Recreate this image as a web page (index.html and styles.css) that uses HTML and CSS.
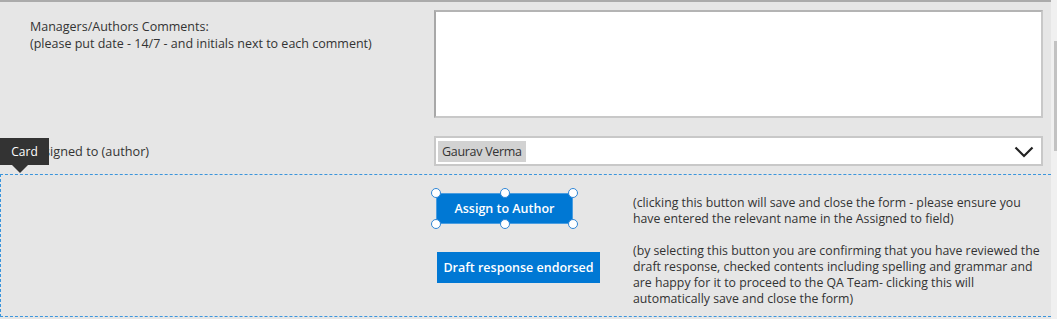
FILE: index.html
```html
<!DOCTYPE html>
<html>

<head>
    <title>Review Form</title>
    <link rel="stylesheet" href="styles.css">
</head>

<body>

    <div class="screen">
        <div class="canvas">

            <div class="row comments-row">
                <div class="label">
                    Managers/Authors Comments:<br>
                    (please put date - 14/7 - and initials next to each comment)
                </div>
                <textarea class="comments"></textarea>
            </div>

            <div class="row assign-row">
                <div class="label single">Assigned to (author)</div>
                <div class="dropdown">
                    <span class="chip">Gaurav Verma</span>
                    <svg class="chevron" width="20" height="12" viewBox="0 0 20 12">
                        <path d="M1.5 1.5 L10 10 L18.5 1.5" fill="none" stroke="#222" stroke-width="2.2" />
                    </svg>
                </div>
                <div class="tooltip">Card</div>
            </div>

            <div class="card">
                <div class="card-row">
                    <div class="btn-cell">
                        <div class="selected">
                            <button class="action-btn assign-btn">Assign to Author</button>
                            <span class="handle h-tl"></span>
                            <span class="handle h-tm"></span>
                            <span class="handle h-tr"></span>
                            <span class="handle h-bl"></span>
                            <span class="handle h-bm"></span>
                            <span class="handle h-br"></span>
                        </div>
                    </div>
                    <p class="note">(clicking this button will save and close the form - please ensure you
                        have entered the relevant name in the Assigned to field)</p>
                </div>
                <div class="card-row second">
                    <div class="btn-cell">
                        <button class="action-btn endorse-btn">Draft response endorsed</button>
                    </div>
                    <p class="note">(by selecting this button you are confirming that you have reviewed the
                        draft response, checked contents including spelling and grammar and
                        are happy for it to proceed to the QA Team- clicking this will
                        automatically save and close the form)</p>
                </div>
            </div>

        </div>

        <div class="scrollbar">
            <div class="thumb"></div>
        </div>
    </div>

</body>

</html>
```

FILE: styles.css
```css
body {
    margin: 0;
    font-family: "Open Sans", "Liberation Sans", sans-serif;
    font-size: 12.5px;
    color: #333;
    background-color: #f0f0f0;
}

.screen {
    display: flex;
    height: 319px;
    overflow: hidden;
}

.canvas {
    flex: 1;
    background-color: #e6e6e6;
    border-top: 2px solid #ababab;
}

.row {
    display: flex;
    position: relative;
}

.label {
    width: 404px;
    padding-left: 30px;
    line-height: 17px;
}

.comments-row {
    padding-top: 8px;
}

.comments-row .label {
    padding-top: 8px;
}

.comments {
    box-sizing: border-box;
    width: 609px;
    height: 108px;
    margin: 0;
    border: 2px solid #c8c8c8;
    border-top-color: #b4b4b4;
    border-left-color: #a8a8a8;
    background: #fff;
    resize: none;
}

.assign-row {
    margin-top: 18px;
}

.label.single {
    padding-top: 7px;
    font-size: 12.7px;
}

.dropdown {
    box-sizing: border-box;
    width: 609px;
    height: 30px;
    border: 2px solid #c8c8c8;
    background: #fff;
    display: flex;
    align-items: center;
    justify-content: space-between;
    padding: 0 7px 0 2px;
}

.chip {
    background-color: #d2d2d2;
    color: #333;
    padding: 2px 4px;
    line-height: 17px;
    font-size: 12.5px;
    letter-spacing: -0.3px;
}

.chevron {
    margin-top: 2px;
}

.tooltip {
    position: absolute;
    left: 0;
    top: 2px;
    width: 49px;
    height: 27px;
    background-color: #333;
    color: #fff;
    font-size: 12px;
    line-height: 27px;
    text-align: center;
}

.tooltip::after {
    content: "";
    position: absolute;
    left: 12px;
    top: 27px;
    border-left: 8px solid transparent;
    border-right: 8px solid transparent;
    border-top: 8px solid #333;
}

.card {
    box-sizing: border-box;
    margin-top: 8px;
    height: 143px;
    border: 1px dashed #3b95dc;
    border-right: none;
    padding-top: 18px;
}

.card-row {
    display: flex;
}

.card-row.second {
    margin-top: 15px;
}

.btn-cell {
    width: 197px;
    padding-left: 435px;
}

.selected {
    position: relative;
    display: inline-block;
    border: 1px solid #4a9de0;
}

.action-btn {
    display: block;
    background-color: #0078d4;
    color: #fff;
    border: none;
    font-family: "Open Sans", "Liberation Sans", sans-serif;
    font-weight: 600;
    font-size: 12.5px;
    cursor: pointer;
}

.assign-btn {
    width: 135px;
    height: 29px;
}

.endorse-btn {
    width: 163px;
    height: 31px;
    margin-left: 1px;
    margin-top: 9px;
}

.handle {
    position: absolute;
    width: 8px;
    height: 8px;
    border: 1.5px solid #2f86d6;
    border-radius: 50%;
    background: #fff;
}

.h-tl { left: -6px; top: -6px; }
.h-tm { left: 63px; top: -6px; }
.h-tr { right: -6px; top: -6px; }
.h-bl { left: -6px; bottom: -6px; }
.h-bm { left: 63px; bottom: -6px; }
.h-br { right: -6px; bottom: -6px; }

.note {
    margin: 0;
    width: 418px;
    line-height: 16.3px;
    font-size: 12.3px;
}

.card-row:first-child .note {
    padding-top: 2px;
}

.scrollbar {
    width: 7px;
    background-color: #f0f0f0;
}

.thumb {
    margin-top: 41px;
    margin-left: 3px;
    width: 4px;
    height: 110px;
    background-color: #c2c2c2;
}
```
